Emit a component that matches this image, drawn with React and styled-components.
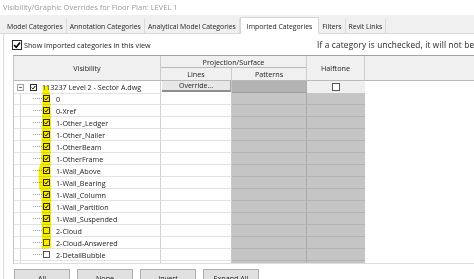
import React from 'react';
import styled, { createGlobalStyle, css } from 'styled-components';

const Global = createGlobalStyle`
  html, body { margin: 0; padding: 0; overflow: hidden; background: #fff; }
  body { font-family: "Open Sans", "Noto Sans", sans-serif; font-size: 7.2px; color: #1b1b1b; }
  * { box-sizing: border-box; }
`;

const COLS = '147px 71px 75px 58px 1fr';

const Dialog = styled.div`
  width: 474px;
  height: 279px;
  overflow: hidden;
  display: flex;
  flex-direction: column;
  background: #fff;
`;

const TitleBar = styled.div`
  flex: none;
  height: 15px;
  line-height: 15px;
  padding-left: 3px;
  color: #9c9c9c;
  font-size: 7.5px;
  white-space: nowrap;
`;

const TabStrip = styled.div`
  flex: none;
  height: 19px;
  display: flex;
  align-items: flex-end;
  padding-left: 4px;
  background: #f0f0f0;
  border-bottom: 1px solid #d9d9d9;
`;

const Tab = styled.div`
  height: 14px;
  line-height: 16px;
  padding: 0 3px;
  font-size: 6.85px;
  white-space: nowrap;
  border-right: 1px solid #dadada;
  color: #222;
  ${(p) =>
    p.$active &&
    css`
      height: 17px;
      line-height: 18px;
      margin-bottom: -1px;
      padding: 0 6px;
      background: #fff;
      border: 1px solid #d6d6d6;
      border-bottom: none;
    `}
`;

const Panel = styled.div`
  flex: 1;
  margin-left: 3px;
  border-left: 1px solid #dcdcdc;
  display: flex;
  flex-direction: column;
  min-height: 0;
`;

const OptionRow = styled.div`
  flex: none;
  height: 21px;
  display: grid;
  grid-template-columns: 305px auto;
  align-items: center;
  padding-left: 8px;
  white-space: nowrap;
`;

const OptionLabel = styled.label`
  display: flex;
  align-items: center;
  gap: 2px;
`;

const Note = styled.div`
  white-space: nowrap;
  color: #222;
  font-size: 8.2px;
  letter-spacing: 0.2px;
`;

const Box = styled.span`
  flex: none;
  display: inline-flex;
  align-items: center;
  justify-content: center;
  width: ${(p) => p.$size || 7}px;
  height: ${(p) => p.$size || 7}px;
  border: 1px solid ${(p) => (p.$checked ? '#2a2a2a' : '#555')};
  background: #fff;
  svg { display: block; }
`;

const Check = ({ checked, size }) => (
  <Box $checked={checked} $size={size}>
    {checked && (
      <svg width={(size || 7) - 2} height={(size || 7) - 2} viewBox="0 0 10 10">
        <path d="M1.5 5.2 L4 7.8 L8.8 1.8" fill="none" stroke="#000" strokeWidth="2" />
      </svg>
    )}
  </Box>
);

const Table = styled.div`
  flex: none;
  margin-left: 9px;
  border-top: 1px solid #a3a3a3;
  border-left: 1px solid #c6c6c6;
`;

const Header = styled.div`
  display: grid;
  grid-template-columns: ${COLS};
  grid-template-rows: 12px 13px;
`;

const HeadCell = styled.div`
  background: #f0f0f0;
  border-right: 1px solid #cbcbcb;
  border-bottom: 1px solid #b9b9b9;
  display: flex;
  align-items: center;
  justify-content: center;
  white-space: nowrap;
  color: #222;
  grid-column: ${(p) => p.$col};
  grid-row: ${(p) => p.$row};
  ${(p) => p.$last && css`border-right: none;`}
`;

const Body = styled.div`
  position: relative;
  height: 183px;
  overflow: hidden;
  border-bottom: 1px solid #dedede;
`;

const Row = styled.div`
  display: grid;
  grid-template-columns: ${COLS};
  height: 12px;
`;

const VisCell = styled.div`
  position: relative;
  display: flex;
  align-items: center;
  gap: ${(p) => (p.$child ? 6 : 5)}px;
  padding-left: ${(p) => (p.$child ? 29 : 3)}px;
  border-right: 1px solid #d2d2d2;
  border-bottom: 1px solid #e3e3e3;
  white-space: nowrap;
  ${(p) =>
    p.$child &&
    css`
      &::before {
        content: '';
        position: absolute;
        left: 6px;
        top: 0;
        bottom: 0;
        width: 1px;
        background: #d6d6d6;
      }
      &::after {
        content: '';
        position: absolute;
        left: 19px;
        width: 9px;
        top: 5px;
        border-top: 1px dotted #9a9a9a;
      }
    `}
`;

const Expander = styled.span`
  flex: none;
  width: 7px;
  height: 7px;
  border: 1px solid #a0a0a0;
  background: #fff;
  display: inline-flex;
  align-items: center;
  justify-content: center;
  margin-right: 1px;
  &::after {
    content: '';
    width: 3px;
    height: 1px;
    background: #666;
  }
`;

const LinesCell = styled.div`
  background: #fff;
  border-right: 1px solid #c9c9c9;
  border-bottom: 1px solid #e3e3e3;
  display: flex;
  padding: 0 0 1px 1px;
`;

const OverrideButton = styled.div`
  flex: 1;
  background: #e7e7e7;
  border-bottom: 2px solid #8e8e8e;
  border-right: 1px solid #a5a5a5;
  display: flex;
  align-items: center;
  justify-content: center;
  font-size: 7px;
  line-height: 9px;
  color: #1b1b1b;
`;

const GrayCell = styled.div`
  background: ${(p) => (p.$dark ? '#b3b3b3' : '#c5c5c5')};
  border-bottom: ${(p) => (p.$dark ? '2px solid #9c9c9c' : '1px solid #b3b3b3')};
  border-right: ${(p) => (p.$divider ? '1px solid #a9a9a9' : 'none')};
`;

const HalftoneTop = styled.div`
  background: #efefef;
  border-bottom: 1px solid #c9c9c9;
  display: flex;
  align-items: center;
  justify-content: center;
`;

const EmptyCell = styled.div`
  background: #fff;
`;

const Highlight = styled.svg`
  position: absolute;
  left: 0;
  top: 0;
  pointer-events: none;
  mix-blend-mode: multiply;
`;

const ButtonRow = styled.div`
  flex: none;
  display: flex;
  gap: 7px;
  margin-top: 5px;
  padding-left: 10px;
`;

const Button = styled.div`
  width: 56px;
  height: 17px;
  flex: none;
  background: #e1e1e1;
  border: 1px solid #adadad;
  display: flex;
  align-items: center;
  justify-content: center;
  color: #1b1b1b;
  white-space: nowrap;
`;

const tabs = [
  'Model Categories',
  'Annotation Categories',
  'Analytical Model Categories',
  'Imported Categories',
  'Filters',
  'Revit Links',
];

const layers = [
  ['0', true],
  ['0-Xref', true],
  ['1-Other_Ledger', true],
  ['1-Other_Nailer', true],
  ['1-OtherBeam', true],
  ['1-OtherFrame', true],
  ['1-Wall_Above', true],
  ['1-Wall_Bearing', true],
  ['1-Wall_Column', true],
  ['1-Wall_Partition', true],
  ['1-Wall_Suspended', true],
  ['2-Cloud', false],
  ['2-Cloud-Answered', false],
  ['2-DetailBubble', false],
  ['2-Elevation', false],
];

export default function App() {
  return (
    <>
      <Global />
      <Dialog>
        <TitleBar>Visibility/Graphic Overrides for Floor Plan: LEVEL 1</TitleBar>
        <TabStrip>
          {tabs.map((t) => (
            <Tab key={t} $active={t === 'Imported Categories'}>
              {t}
            </Tab>
          ))}
        </TabStrip>
        <Panel>
          <OptionRow>
            <OptionLabel>
              <Check checked size={10} />
              Show imported categories in this view
            </OptionLabel>
            <Note>If a category is unchecked, it will not be visible.</Note>
          </OptionRow>
          <Table>
            <Header>
              <HeadCell $col="1" $row="1 / 3">Visibility</HeadCell>
              <HeadCell $col="2 / 4" $row="1">Projection/Surface</HeadCell>
              <HeadCell $col="2" $row="2">Lines</HeadCell>
              <HeadCell $col="3" $row="2">Patterns</HeadCell>
              <HeadCell $col="4" $row="1 / 3">Halftone</HeadCell>
              <HeadCell $col="5" $row="1 / 3" $last />
            </Header>
            <Body>
              <Row>
                <VisCell>
                  <Expander />
                  <Check checked />
                  113237 Level 2 - Sector A.dwg
                </VisCell>
                <LinesCell>
                  <OverrideButton>Override...</OverrideButton>
                </LinesCell>
                <GrayCell $dark $divider />
                <HalftoneTop>
                  <Check size={8} />
                </HalftoneTop>
                <EmptyCell />
              </Row>
              {layers.map(([name, checked]) => (
                <Row key={name}>
                  <VisCell $child>
                    <Check checked={checked} />
                    {name}
                  </VisCell>
                  <LinesCell />
                  <GrayCell $divider />
                  <GrayCell />
                  <EmptyCell />
                </Row>
              ))}
              <Highlight width="147" height="183" viewBox="0 0 147 183">
                <path
                  d="M29 5 L34 5 L36 12 L37 40 L36.5 84 L37 112 L37 167 L28 168 L27.5 112 L25 107 L24.5 88 L27 82 L28 40 L28.5 12 Z"
                  fill="#f8ec00"
                />
              </Highlight>
            </Body>
          </Table>
          <ButtonRow>
            <Button>All</Button>
            <Button>None</Button>
            <Button>Invert</Button>
            <Button>Expand All</Button>
          </ButtonRow>
        </Panel>
      </Dialog>
    </>
  );
}
